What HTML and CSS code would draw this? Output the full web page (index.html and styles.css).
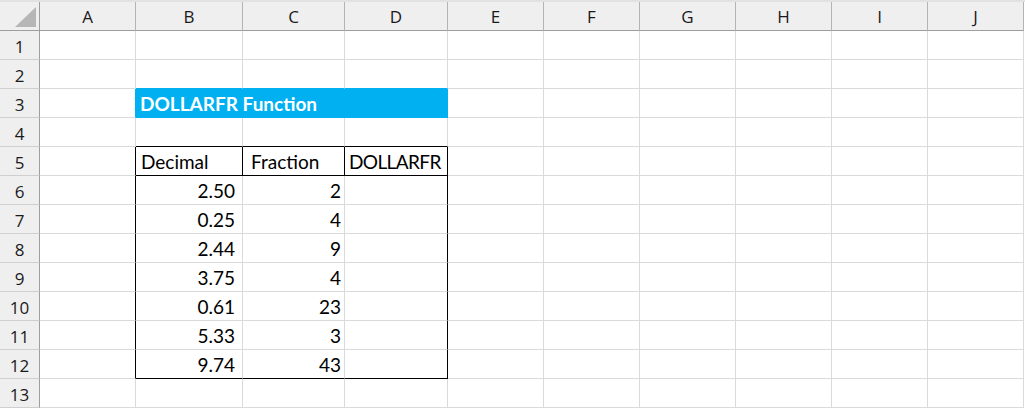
FILE: index.html
```html
<html>

<head>
    <link rel="stylesheet" href="styles.css">
    <title>DOLLARFR Function</title>
</head>

<body>
    <div class="strip"></div>
    <div class="sheet">
        <!-- column headers -->
        <div class="corner"><span class="tri"></span></div>
        <div class="ch">A</div><div class="ch">B</div><div class="ch">C</div><div class="ch">D</div><div class="ch">E</div>
        <div class="ch">F</div><div class="ch">G</div><div class="ch">H</div><div class="ch">I</div><div class="ch">J</div>

        <div class="rh">1</div>
        <div class="c"></div><div class="c"></div><div class="c"></div><div class="c"></div><div class="c"></div>
        <div class="c"></div><div class="c"></div><div class="c"></div><div class="c"></div><div class="c"></div>

        <div class="rh">2</div>
        <div class="c"></div><div class="c bb-blue"></div><div class="c bb-blue"></div><div class="c bb-blue"></div><div class="c"></div>
        <div class="c"></div><div class="c"></div><div class="c"></div><div class="c"></div><div class="c"></div>

        <div class="rh">3</div>
        <div class="c br-blue"></div><div class="c fill title">DOLLARFR Function</div><div class="c fill"></div><div class="c fill"></div><div class="c"></div>
        <div class="c"></div><div class="c"></div><div class="c"></div><div class="c"></div><div class="c"></div>

        <div class="rh">4</div>
        <div class="c"></div><div class="c bb-black"></div><div class="c bb-black"></div><div class="c bb-black"></div><div class="c"></div>
        <div class="c"></div><div class="c"></div><div class="c"></div><div class="c"></div><div class="c"></div>

        <div class="rh">5</div>
        <div class="c br-black"></div>
        <div class="c br-black bb-black head-b">Decimal</div>
        <div class="c br-black bb-black head-c">Fraction</div>
        <div class="c br-black bb-black head-d">DOLLARFR</div>
        <div class="c"></div>
        <div class="c"></div><div class="c"></div><div class="c"></div><div class="c"></div><div class="c"></div>

        <div class="rh">6</div>
        <div class="c br-black"></div><div class="c num-b">2.50</div><div class="c num-c">2</div><div class="c br-black"></div><div class="c"></div>
        <div class="c"></div><div class="c"></div><div class="c"></div><div class="c"></div><div class="c"></div>

        <div class="rh">7</div>
        <div class="c br-black"></div><div class="c num-b">0.25</div><div class="c num-c">4</div><div class="c br-black"></div><div class="c"></div>
        <div class="c"></div><div class="c"></div><div class="c"></div><div class="c"></div><div class="c"></div>

        <div class="rh">8</div>
        <div class="c br-black"></div><div class="c num-b">2.44</div><div class="c num-c">9</div><div class="c br-black"></div><div class="c"></div>
        <div class="c"></div><div class="c"></div><div class="c"></div><div class="c"></div><div class="c"></div>

        <div class="rh">9</div>
        <div class="c br-black"></div><div class="c num-b">3.75</div><div class="c num-c">4</div><div class="c br-black"></div><div class="c"></div>
        <div class="c"></div><div class="c"></div><div class="c"></div><div class="c"></div><div class="c"></div>

        <div class="rh">10</div>
        <div class="c br-black"></div><div class="c num-b">0.61</div><div class="c num-c">23</div><div class="c br-black"></div><div class="c"></div>
        <div class="c"></div><div class="c"></div><div class="c"></div><div class="c"></div><div class="c"></div>

        <div class="rh">11</div>
        <div class="c br-black"></div><div class="c num-b">5.33</div><div class="c num-c">3</div><div class="c br-black"></div><div class="c"></div>
        <div class="c"></div><div class="c"></div><div class="c"></div><div class="c"></div><div class="c"></div>

        <div class="rh">12</div>
        <div class="c br-black"></div><div class="c num-b bb-black">9.74</div><div class="c num-c bb-black">43</div><div class="c br-black bb-black"></div><div class="c"></div>
        <div class="c"></div><div class="c"></div><div class="c"></div><div class="c"></div><div class="c"></div>

        <div class="rh">13</div>
        <div class="c"></div><div class="c"></div><div class="c"></div><div class="c"></div><div class="c"></div>
        <div class="c"></div><div class="c"></div><div class="c"></div><div class="c"></div><div class="c"></div>
    </div>
</body>

</html>
```

FILE: styles.css
```css
body {
    margin: 0;
    padding: 0;
    overflow: hidden;
    background-color: #fff;
    font-family: Lato, "Liberation Sans", sans-serif;
    color: #000;
}

.strip {
    height: 2px;
    background-color: #e2e2e2;
}

.sheet {
    display: grid;
    grid-template-columns: 40px 96px 107px 102px 103px repeat(6, 96px);
    grid-template-rows: repeat(14, 29px);
}

/* header cells */
.corner,
.ch,
.rh {
    box-sizing: border-box;
    background-color: #efefef;
    display: flex;
    font-family: "Open Sans", "Noto Sans", sans-serif;
    font-size: 17px;
    color: #1a1a1a;
}

.corner {
    justify-content: flex-end;
    align-items: flex-end;
    padding: 0 3px 3px 0;
    border-right: 1px solid #9e9e9e;
    border-bottom: 1px solid #9e9e9e;
}

.corner .tri {
    width: 21px;
    height: 20px;
    background-color: #b6b6b6;
    clip-path: polygon(100% 0, 100% 100%, 0 100%);
}

.ch {
    justify-content: center;
    align-items: center;
    padding-top: 1px;
    border-right: 1px solid #b4b4b4;
    border-bottom: 1px solid #9e9e9e;
}

.rh {
    justify-content: center;
    align-items: center;
    padding-top: 2px;
    border-right: 1px solid #9e9e9e;
    border-bottom: 1px solid #cfcfcf;
}

/* worksheet cells */
.c {
    box-sizing: border-box;
    display: flex;
    align-items: flex-end;
    white-space: nowrap;
    font-size: 19px;
    line-height: 24px;
    padding: 0 4px 1px 4px;
    border-right: 1px solid #dadada;
    border-bottom: 1px solid #dadada;
}

.fill {
    background-color: #00b0f0;
    border-right-color: #00b0f0;
    border-bottom-color: #00b0f0;
}

.bb-blue {
    border-bottom-color: #00b0f0;
}

.br-blue {
    border-right-color: #00b0f0;
}

.bb-black {
    border-bottom-color: #000;
}

.br-black {
    border-right-color: #000;
}

/* text spills over C3 and D3, so keep it above them */
.title {
    position: relative;
    z-index: 1;
    color: #fff;
    font-weight: bold;
    padding-left: 4px;
}

.head-b {
    padding-left: 5px;
}

.head-c {
    padding-left: 8px;
}

.head-d {
    padding-left: 4px;
    letter-spacing: -0.6px;
}

.num-b,
.num-c {
    justify-content: flex-end;
}

.num-b {
    padding-right: 7px;
}

.num-c {
    padding-right: 3px;
}
```
